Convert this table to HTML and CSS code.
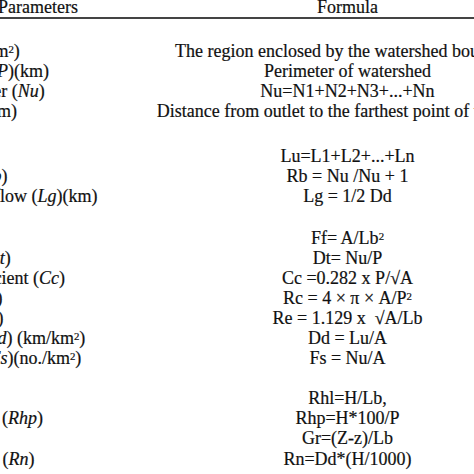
FILE: index.html
```html
<!DOCTYPE html>
<html>
<head>
<meta charset="utf-8">
<link rel="stylesheet" href="styles.css">
</head>
<body>
<div class="crop">
  <div class="table">
    <div class="row head">
      <div class="param">Parameters</div>
      <div class="formula"><span>Formula</span></div>
    </div>

    <div class="row section"><div class="param">Basic parameters</div><div class="formula"></div></div>
    <div class="row"><div class="param">Drainage area (<i>A</i>)(km<sup>2</sup>)</div><div class="formula"><span>The region enclosed by the watershed boundary</span></div></div>
    <div class="row"><div class="param">Drainage perimeter(<i>P</i>)(km)</div><div class="formula"><span>Perimeter of watershed</span></div></div>
    <div class="row"><div class="param">Total Stream Number (<i>Nu</i>)</div><div class="formula"><span>Nu=N1+N2+N3+...+Nn</span></div></div>
    <div class="row"><div class="param">Basin length (<i>Lb</i>) (km)</div><div class="formula"><span>Distance from outlet to the farthest point of the basin</span></div></div>

    <div class="row section section-linear"><div class="param">Linear parameters</div><div class="formula"></div></div>
    <div class="row"><div class="param">Stream length (<i>Lu</i>)</div><div class="formula"><span>Lu=L1+L2+...+Ln</span></div></div>
    <div class="row"><div class="param">Bifurcation ratio (<i>Rb</i>)</div><div class="formula"><span>Rb = Nu /Nu + 1</span></div></div>
    <div class="row"><div class="param">Length of overland flow (<i>Lg</i>)(km)</div><div class="formula"><span>Lg = 1/2 Dd</span></div></div>

    <div class="row section section-areal"><div class="param">Areal parameters</div><div class="formula"></div></div>
    <div class="row"><div class="param">Form factor (<i>Ff</i>)</div><div class="formula"><span>Ff= A/Lb<sup>2</sup></span></div></div>
    <div class="row"><div class="param">Drainage Texture (<i>Dt</i>)</div><div class="formula"><span>Dt= Nu/P</span></div></div>
    <div class="row"><div class="param">Compactness coefficient (<i>Cc</i>)</div><div class="formula"><span>Cc =0.282 x P/√A</span></div></div>
    <div class="row"><div class="param">Circularity ratio (<i>Rc</i>)</div><div class="formula"><span>Rc = 4 × π × A/P<sup>2</sup></span></div></div>
    <div class="row"><div class="param">Elongation ratio (<i>Re</i>)</div><div class="formula"><span>Re = 1.129 x &nbsp;√A/Lb</span></div></div>
    <div class="row"><div class="param">Drainage density (<i>Dd</i>) (km/km<sup>2</sup>)</div><div class="formula"><span>Dd = Lu/A</span></div></div>
    <div class="row"><div class="param">Stream frequency (<i>Fs</i>)(no./km<sup>2</sup>)</div><div class="formula"><span>Fs = Nu/A</span></div></div>

    <div class="row section"><div class="param">Relief parameters</div><div class="formula"></div></div>
    <div class="row"><div class="param">Relief ratio (<i>Rhl</i>)</div><div class="formula"><span>Rhl=H/Lb,</span></div></div>
    <div class="row"><div class="param">Relative Relief ratio (<i>Rhp</i>)</div><div class="formula"><span>Rhp=H*100/P</span></div></div>
    <div class="row"><div class="param">Gradient ratio (<i>Gr</i>)</div><div class="formula"><span>Gr=(Z-z)/Lb</span></div></div>
    <div class="row row-last"><div class="param">Ruggedness number (<i>Rn</i>)</div><div class="formula"><span>Rn=Dd*(H/1000)</span></div></div>
  </div>
</div>
</body>
</html>
```

FILE: styles.css
```css
html, body {
  margin: 0;
  padding: 0;
  background: #ffffff;
}

.crop {
  width: 474px;
  height: 474px;
  overflow: hidden;
  background: #ffffff;
}

.table {
  width: 622px;
  margin-left: -148.5px;
  margin-top: -3px;
  font-family: "Liberation Serif", "Times New Roman", serif;
  font-size: 18px;
  line-height: 20px;
  color: #111111;
  -webkit-text-stroke: 0.2px #111111;
}

.row {
  display: grid;
  grid-template-columns: 373px 246px;
  height: 20px;
}

.param {
  white-space: nowrap;
  text-align: left;
}

.formula {
  display: flex;
  justify-content: center;
  white-space: nowrap;
}

.head {
  border-bottom: 2px solid #444444;
  margin-bottom: 2px;
}

.head .param {
  text-align: center;
}

.section .param {
  color: transparent;
  -webkit-text-stroke: 0;
}

.section-linear {
  height: 25px;
}

.section-areal {
  height: 22px;
}

.row-last {
  margin-top: 1px;
}

sup {
  font-size: 0.6em;
  line-height: 0;
  vertical-align: 0.4em;
}

i {
  font-style: italic;
}
```
